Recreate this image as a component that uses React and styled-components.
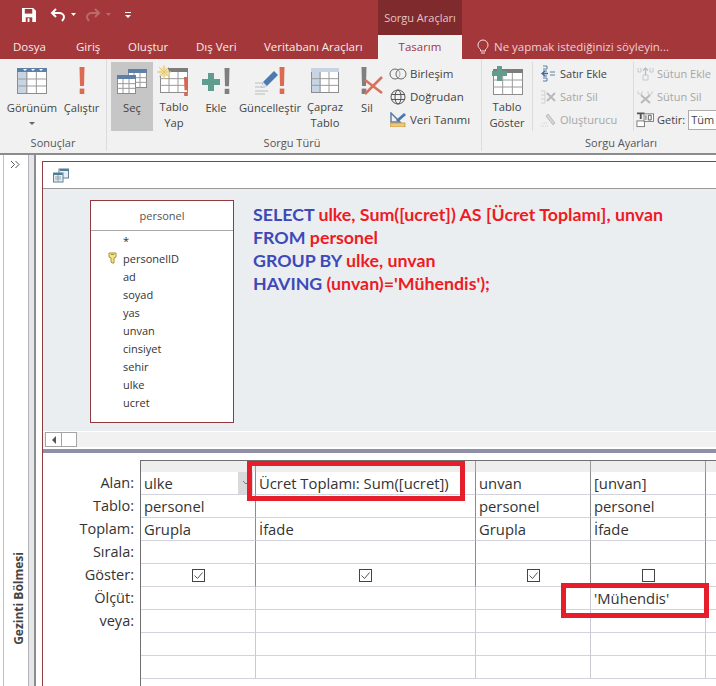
import React from 'react'
import styled, { createGlobalStyle } from 'styled-components'

const GlobalStyle = createGlobalStyle`
  html, body {
    margin: 0;
    padding: 0;
    background: #fff;
  }
  * {
    box-sizing: border-box;
  }
`

const Page = styled.div`
  position: relative;
  width: 716px;
  height: 686px;
  overflow: hidden;
  font-family: "Open Sans", "Noto Sans", sans-serif;
  color: #444;
  background: #fff;
`

const TitleBar = styled.div`
  display: flex;
  height: 35px;
  background: #a4373a;
`
const Qat = styled.div`
  display: flex;
  align-items: center;
  width: 378px;
  padding: 0 0 5px 22px;
`
const QatItem = styled.span`
  display: flex;
  margin-left: ${(p) => p.$ml || 0}px;
`
const ContextTitle = styled.div`
  width: 84px;
  background: #7f2a2d;
  color: #e6c4c5;
  font-size: 11px;
  line-height: 36px;
  text-align: center;
`

const TabBar = styled.div`
  display: flex;
  height: 24px;
  padding-left: 13px;
  background: #a4373a;
  font-size: 11.5px;
  line-height: 24px;
  color: #f7eaea;
`
const Tab = styled.div`
  width: ${(p) => p.$w}px;
  white-space: nowrap;
`
const ActiveTab = styled.div`
  width: 84px;
  background: #f1f1f1;
  color: #a4373a;
  text-align: center;
`
const TellMe = styled.div`
  display: flex;
  align-items: center;
  gap: 5px;
  margin-left: 15px;
  color: #ecd0d1;
  white-space: nowrap;
`

const Ribbon = styled.div`
  display: flex;
  height: 94px;
  background: #f1f1f1;
`
const Group = styled.div`
  display: flex;
  flex-direction: column;
  flex: none;
  width: ${(p) => p.$w}px;
  border-right: ${(p) => (p.$open ? 'none' : '1px solid #dcdcdc')};
  margin-bottom: 2px;
`
const GroupBody = styled.div`
  display: flex;
  height: 76px;
  padding: 3px 0 0 ${(p) => p.$pad || 0}px;
`
const GroupLabel = styled.div`
  height: 16px;
  font-size: 11px;
  line-height: 16px;
  color: #555;
  text-align: center;
  padding-left: ${(p) => p.$left || 0}px;
  padding-right: ${(p) => p.$right || 0}px;
`
const LargeButton = styled.div`
  display: flex;
  flex-direction: column;
  align-items: center;
  flex: none;
  width: ${(p) => p.$w}px;
  height: 69px;
  background: ${(p) => (p.$active ? '#c6c6c6' : 'transparent')};
  font-size: 11.2px;
  line-height: 16px;
  text-align: center;
  white-space: nowrap;
`
const LargeIcon = styled.div`
  display: flex;
  align-items: center;
  justify-content: center;
  height: 38px;
  padding-left: ${(p) => p.$shift || 0}px;
`
const Caret = styled.div`
  width: 0;
  height: 0;
  margin-top: 6px;
  border-left: 3px solid transparent;
  border-right: 3px solid transparent;
  border-top: 3px solid #666;
`
const SmallColumn = styled.div`
  display: flex;
  flex-direction: column;
  flex: none;
  width: ${(p) => p.$w}px;
  height: 69px;
  padding-left: ${(p) => p.$pad || 0}px;
  border-left: ${(p) => (p.$line ? '1px solid #dcdcdc' : 'none')};
  font-size: ${(p) => p.$fs || 11.5}px;
`
const SmallButton = styled.div`
  display: flex;
  align-items: center;
  gap: 3px;
  height: 23px;
  white-space: nowrap;
  color: ${(p) => (p.$off ? '#a6a6a6' : '#444')};
`
const SmallIcon = styled.span`
  display: flex;
  justify-content: center;
  flex: none;
  width: 18px;
`
const TopInput = styled.span`
  display: block;
  width: 28px;
  height: 20px;
  margin-left: 0;
  padding-left: 2px;
  background: #fff;
  border: 1px solid #ababab;
  border-right: none;
  line-height: 18px;
`

const Workspace = styled.div`
  display: flex;
  height: 533px;
  border-top: 2px solid #8c8c8c;
`
const NavPane = styled.div`
  display: flex;
  flex-direction: column;
  justify-content: space-between;
  flex: none;
  width: 28px;
  margin-left: 3px;
  border-left: 1px solid #c0c0c0;
  padding: 5px 0 41px 6px;
  background: #fff;
`
const NavTitle = styled.div`
  writing-mode: vertical-rl;
  transform: rotate(180deg);
  font-size: 12px;
  font-weight: 700;
  color: #444;
  white-space: nowrap;
`
const Strip = styled.div`
  flex: none;
  width: 8px;
  margin-left: -3px;
  background: #e3e6ea;
  border-left: 1px solid #b5b5b5;
  border-right: 2px solid #8d8d8d;
`
const Gutter = styled.div`
  flex: none;
  width: 6px;
  background: #fff;
`
const QueryWindow = styled.div`
  flex: none;
  width: 680px;
  margin-top: 6px;
  border-left: 1px solid #8f3b40;
  border-top: 1px solid #8f3b40;
  display: flex;
  flex-direction: column;
  background: #fff;
`
const WindowHead = styled.div`
  display: flex;
  align-items: center;
  height: 27px;
  padding-left: 10px;
  border-bottom: 1px solid #9a9a9a;
`
const DesignPane = styled.div`
  display: flex;
  height: 242px;
  padding: 11px 0 0 47px;
  background: #ebeef1;
  gap: 19px;
`
const TableBox = styled.div`
  flex: none;
  width: 144px;
  height: 223px;
  background: #fff;
  border: 1px solid #8f3b40;
`
const TableName = styled.div`
  height: 30px;
  border-bottom: 1px solid #a8a8a8;
  font-size: 11px;
  line-height: 30px;
  text-align: center;
  color: #555;
`
const FieldList = styled.div`
  padding-top: 0;
`
const Field = styled.div`
  display: flex;
  align-items: center;
  height: 18px;
  padding-left: 17px;
  font-size: 11px;
  color: #333;
`
const FieldIcon = styled.span`
  display: flex;
  flex: none;
  width: 15px;
`
const Sql = styled.div`
  padding-top: 3px;
  font-family: Lato, "Open Sans", sans-serif;
  font-weight: 700;
  font-size: 17.8px;
  line-height: 23px;
  white-space: nowrap;
`
const SqlLine = styled.div`
  color: #ed1c24;
`
const Keyword = styled.span`
  color: #3d49b8;
`
const HScroll = styled.div`
  display: flex;
  height: 15px;
  margin-top: 1px;
  padding-left: 2px;
  background: #f1f1f1;
`
const ScrollButton = styled.div`
  display: flex;
  align-items: center;
  justify-content: center;
  width: ${(p) => p.$w}px;
  background: #fff;
  border: 1px solid #a5a5a5;
  border-right: ${(p) => (p.$join ? 'none' : '1px solid #a5a5a5')};
`
const ArrowLeft = styled.div`
  width: 0;
  height: 0;
  border-top: 4px solid transparent;
  border-bottom: 4px solid transparent;
  border-right: 4px solid #555;
`
const Splitter = styled.div`
  height: 4px;
  margin-top: 2px;
  background: #8f8fa8;
`
const GridPane = styled.div`
  flex: 1;
  display: flex;
  padding-top: 7px;
  background: #fff;
`
const RowLabels = styled.div`
  flex: none;
  width: 97px;
  padding-top: 12px;
`
const RowLabel = styled.div`
  height: 23px;
  padding-right: 6px;
  font-size: 14.5px;
  line-height: 21px;
  color: #333;
  text-align: right;
`
const GridTable = styled.div`
  display: grid;
  grid-template-columns: 115px 220px 115px 115px 30px;
  grid-auto-rows: 23px;
  grid-template-rows: 11px;
  border-left: 1px solid #6f6f6f;
  border-top: 1px solid #6f6f6f;
`
const HeadCell = styled.div`
  background: #eeeeee;
  border-right: 1px solid #9a9a9a;
`
const Cell = styled.div`
  position: relative;
  display: flex;
  align-items: center;
  justify-content: ${(p) => (p.$center ? 'center' : 'flex-start')};
  padding-left: ${(p) => (p.$center ? 0 : 3)}px;
  border-right: 1px solid ${(p) => (p.$soft ? '#c9c9d4' : '#8c8c8c')};
  border-bottom: 1px solid #d3d3de;
  font-size: 14.8px;
  color: #333;
  white-space: nowrap;
`
const DropButton = styled.div`
  position: absolute;
  top: 0;
  right: 2px;
  bottom: 0;
  width: 15px;
  display: flex;
  align-items: center;
  justify-content: center;
  background: #dadada;
`
const Highlight = styled.div`
  position: absolute;
  left: ${(p) => p.$x}px;
  top: ${(p) => p.$y}px;
  width: ${(p) => p.$w}px;
  height: ${(p) => p.$h}px;
  border: 5px solid #e61d2b;
`

const SaveIcon = () => (
  <svg width="14" height="14" viewBox="0 0 15 15">
    <path d="M0 0h12l3 3v12H0z" fill="#fff" />
    <rect x="3" y="1" width="8" height="5" fill="#a4373a" />
    <rect x="4" y="10" width="7" height="5" fill="#a4373a" />
    <rect x="6" y="11" width="2" height="4" fill="#fff" />
  </svg>
)
const UndoIcon = ({ color }) => (
  <svg width="26" height="14" viewBox="0 0 26 14">
    <path d="M6 1L2 5l4 4" fill="none" stroke={color} strokeWidth="2" />
    <path d="M2 5h7c3 0 5 2 5 4s-1 3-2 4" fill="none" stroke={color} strokeWidth="2" />
    <path d="M21 5h5l-2.500 3z" fill={color} />
  </svg>
)
const RedoIcon = ({ color }) => (
  <svg width="26" height="14" viewBox="0 0 26 14">
    <path d="M10 1l4 4-4 4" fill="none" stroke={color} strokeWidth="2" />
    <path d="M14 5H7C4 5 2 7 2 9s1 3 2 4" fill="none" stroke={color} strokeWidth="2" />
    <path d="M21 5h5l-2.500 3z" fill={color} />
  </svg>
)
const MoreIcon = () => (
  <svg width="6" height="10" viewBox="0 0 6 10">
    <rect x="0" y="2" width="6" height="1" fill="#fff" />
    <path d="M0 5h6L3 8z" fill="#fff" />
  </svg>
)
const BulbIcon = () => (
  <svg width="12" height="16" viewBox="0 0 12 16">
    <path d="M3.500 10.500C2 9 1 8 1 6a5 5 0 0 1 10 0c0 2-1 3-2.500 4.500V12h-5z" fill="none" stroke="#f3dfdf" />
    <path d="M4 14h4" stroke="#f3dfdf" />
  </svg>
)

// tablo cizimi: x,y konumuna basliklı grid
const GridGlyph = ({ x = 0, y = 0, w, h, head = '#5f7fa8', cols = 3, rows = 3, side }) => {
  const hh = 4
  const lines = []
  for (let i = 1; i < cols; i++) {
    const lx = x + (w * i) / cols
    lines.push(<path key={'c' + i} d={`M${lx} ${y}v${h}`} stroke="#9a9a9a" />)
  }
  for (let i = 1; i < rows; i++) {
    const ly = y + hh + ((h - hh) * i) / rows
    lines.push(<path key={'r' + i} d={`M${x} ${ly}h${w}`} stroke="#9a9a9a" />)
  }
  return (
    <g>
      <rect x={x + 0.5} y={y + 0.5} width={w} height={h} fill="#fff" stroke="#8c8c8c" />
      {side && <rect x={x + 1} y={y + hh} width={w / cols} height={h - hh} fill="#c6d4e4" />}
      {lines}
      <rect x={x} y={y} width={w + 1} height={hh} fill={head} />
    </g>
  )
}
const Bang = ({ x, y, h, color = '#d9644f', w = 3 }) => (
  <g fill={color}>
    <path d={`M${x - w / 2} ${y}h${w}l-0.500 ${h * 0.7}h-${w - 1}z`} />
    <rect x={x - w / 2 + 0.2} y={y + h * 0.8} width={w - 0.4} height={h * 0.2} />
  </g>
)

const ViewIcon = () => (
  <svg width="32" height="28" viewBox="0 0 32 28">
    <GridGlyph x={1} y={1} w={29} h={25} side />
    <path d="M7 2h4l-2 2zM15 2h4l-2 2zM23 2h4l-2 2z" fill="#fff" />
  </svg>
)
const RunIcon = () => (
  <svg width="12" height="30" viewBox="0 0 12 30">
    <Bang x={6} y={1} h={27} w={5} color="#dc6a52" />
  </svg>
)
const SelectIcon = () => (
  <svg width="32" height="26" viewBox="0 0 32 26">
    <GridGlyph x={12} y={1} w={18} h={18} />
    <GridGlyph x={1} y={7} w={18} h={18} />
  </svg>
)
const MakeTableIcon = () => (
  <svg width="34" height="32" viewBox="0 0 34 32">
    <GridGlyph x={3} y={3} w={27} h={24} head="#7c7c7c" />
    <circle cx="7" cy="7" r="5" fill="#f3e3b0" />
    <path d="M7 0v14M0 7h14M2 2l10 10M12 2L2 12" stroke="#e5c777" />
    <Bang x={29} y={12} h={19} w={4} color="#d9644f" />
  </svg>
)
const AppendIcon = () => (
  <svg width="28" height="28" viewBox="0 0 28 28">
    <path d="M6 0h6v6h6v6h-6v6H6v-6H0V6h6z" fill="#5f9e8f" transform="translate(0 6)" />
    <Bang x={25} y={1} h={26} w={5} color="#7f7f7f" />
  </svg>
)
const UpdateIcon = () => (
  <svg width="32" height="28" viewBox="0 0 32 28">
    <path d="M1 16h12M1 20h10M1 24h13M1 27h10" stroke="#bdbdbd" />
    <path d="M7 21l2-6L20 4l4 4L13 19z" fill="#4c7ab0" />
    <path d="M7 21l2-6 4 4z" fill="#dbe4ee" />
    <Bang x={28} y={0} h={27} w={5} color="#dc6a52" />
  </svg>
)
const CrossIcon = () => (
  <svg width="30" height="27" viewBox="0 0 30 27">
    <GridGlyph x={1} y={1} w={27} h={24} head="#c6d4e4" side />
  </svg>
)
const DeleteIcon = () => (
  <svg width="24" height="30" viewBox="0 0 24 30">
    <Bang x={4} y={1} h={27} w={5} color="#7f7f7f" />
    <path d="M5 14l17 13M22 11L5 28" stroke="#d9705c" strokeWidth="2.500" />
  </svg>
)
const ShowTableIcon = () => (
  <svg width="32" height="30" viewBox="0 0 32 30">
    <GridGlyph x={2} y={3} w={29} h={25} head="#7c7c7c" />
    <path d="M6 0h5v5h5v5h-5v5H6v-5H1V5h5z" fill="#5f9e8f" />
  </svg>
)
const JoinIcon = () => (
  <svg width="18" height="12" viewBox="0 0 18 12">
    <circle cx="6" cy="6" r="5" fill="none" stroke="#666" />
    <circle cx="12" cy="6" r="5" fill="#f5f5f5" stroke="#666" fillOpacity="0.4" />
  </svg>
)
const GlobeIcon = () => (
  <svg width="16" height="16" viewBox="0 0 16 16" fill="none" stroke="#555">
    <circle cx="8" cy="8" r="7" />
    <ellipse cx="8" cy="8" rx="3" ry="7" />
    <path d="M1 5.500h14M1 10.500h14" />
  </svg>
)
const DefinitionIcon = () => (
  <svg width="17" height="15" viewBox="0 0 17 15">
    <path d="M1 1v9h9z" fill="none" stroke="#5f7fa8" strokeWidth="1.500" />
    <path d="M6 8l8-7 2 2-8 7z" fill="#4c7ab0" />
    <rect x="0" y="11" width="15" height="4" fill="#f0c977" stroke="#c08a2e" strokeWidth="0.700" />
  </svg>
)
const RowAddIcon = () => (
  <svg width="16" height="17" viewBox="0 0 16 17" fill="none">
    <path d="M3 1h4v3H3M3 6h4M3 11h4M3 13h4v3H3" stroke="#5f7fa8" />
    <path d="M8 8.500H2M5 6L2 8.500 5 11" stroke="#3f6aa0" strokeWidth="1.300" />
    <path d="M10 7h5M10 10h5" stroke="#5f7fa8" />
  </svg>
)
const RowRemoveIcon = () => (
  <svg width="16" height="14" viewBox="0 0 16 14" fill="none">
    <path d="M1 1h4v12H1M1 5h4M1 9h4" stroke="#cfcfcf" />
    <path d="M7 3l8 8M15 3l-8 8" stroke="#b9b9b9" strokeWidth="2" />
  </svg>
)
const BuilderIcon = () => (
  <svg width="16" height="14" viewBox="0 0 16 14" fill="none">
    <path d="M1 13h8M2 10h5" stroke="#cfcfcf" strokeDasharray="1 1" />
    <path d="M8 1l7 9-2 2-7-9z" fill="#d5d5d5" stroke="#bcbcbc" />
  </svg>
)
const ColAddIcon = () => (
  <svg width="17" height="14" viewBox="0 0 17 14" fill="none">
    <path d="M1 1v4h3V1M13 1v4h3V1M6 8h5v5H6z" stroke="#c8c8c8" />
    <path d="M8.500 8V1M6 3.500l2.500-2.500L11 3.500" stroke="#a9bcd2" strokeWidth="1.200" />
  </svg>
)
const ColRemoveIcon = () => (
  <svg width="17" height="14" viewBox="0 0 17 14" fill="none">
    <path d="M1 1v3h4V1M11 1v3h4V1" stroke="#cfcfcf" />
    <path d="M4 5l9 8M13 5l-9 8" stroke="#b9b9b9" strokeWidth="2" />
  </svg>
)
const TopIcon = () => (
  <svg width="19" height="17" viewBox="0 0 19 17">
    <path d="M1 1h8v2H6v5H4V3H1z" fill="#555" />
    <rect x="1" y="10" width="8" height="6" fill="#fff" stroke="#7a7a7a" />
    <rect x="8.500" y="2.500" width="10" height="8" fill="#fff" stroke="#7a7a7a" />
    <path d="M10.500 4v5M13 4h3v5h-3z" stroke="#555" fill="none" />
  </svg>
)
const WindowIcon = () => (
  <svg width="16" height="15" viewBox="0 0 16 15">
    <rect x="6" y="1" width="9.500" height="9" fill="#e9eff5" stroke="#5f7f95" />
    <rect x="7" y="1" width="8" height="2" fill="#4f7f95" />
    <rect x="0.500" y="5" width="9.500" height="9" fill="#e9eff5" stroke="#5f7f95" />
    <rect x="1" y="5" width="8.500" height="2" fill="#4f7f95" />
    <path d="M2 9h6M2 11h6M5 7v7" stroke="#8aa5b5" />
  </svg>
)
const KeyIcon = () => (
  <svg width="9" height="12" viewBox="0 0 9 12">
    <path d="M1 1h7v4L6 6v5H4l-1-1V6L1 5z" fill="#f3e38a" stroke="#a8922e" />
    <path d="M3 2.500h3" stroke="#a8922e" />
  </svg>
)
const Chevron = () => (
  <svg width="8" height="6" viewBox="0 0 8 6">
    <path d="M1 1l3 3 3-3" fill="none" stroke="#777" />
  </svg>
)
const DoubleChevron = () => (
  <svg width="10" height="9" viewBox="0 0 10 9" fill="none" stroke="#555">
    <path d="M1 1l3.500 3.500L1 8M5.500 1L9 4.500 5.500 8" />
  </svg>
)
const CheckBox = ({ on }) => (
  <svg width="13" height="13" viewBox="0 0 13 13" fill="none">
    <rect x="0.500" y="0.500" width="12" height="12" stroke="#444" />
    {on && <path d="M2.500 6.500l3 3 5-6" stroke="#555" />}
  </svg>
)

const fields = ['*', 'personelID', 'ad', 'soyad', 'yas', 'unvan', 'cinsiyet', 'sehir', 'ulke', 'ucret']
const labels = ['Alan:', 'Tablo:', 'Toplam:', 'Sırala:', 'Göster:', 'Ölçüt:', 'veya:']

const gridRows = [
  ['ulke', 'Ücret Toplamı: Sum([ucret])', 'unvan', '[unvan]', ''],
  ['personel', '', 'personel', 'personel', ''],
  ['Grupla', 'İfade', 'Grupla', 'İfade', ''],
  ['', '', '', '', ''],
  [true, true, true, false, ''],
  ['', '', '', "'Mühendis'", ''],
  ['', '', '', '', ''],
  ['', '', '', '', ''],
  ['', '', '', '', ''],
]

function App() {
  return (
    <Page>
      <GlobalStyle />
      <TitleBar>
        <Qat>
          <SaveIcon />
          <QatItem $ml={14}><UndoIcon color="#fff" /></QatItem>
          <QatItem $ml={9}><RedoIcon color="#bb6a6c" /></QatItem>
          <QatItem $ml={14}><MoreIcon /></QatItem>
        </Qat>
        <ContextTitle>Sorgu Araçları</ContextTitle>
      </TitleBar>
      <TabBar>
        <Tab $w={63}>Dosya</Tab>
        <Tab $w={52}>Giriş</Tab>
        <Tab $w={68}>Oluştur</Tab>
        <Tab $w={68}>Dış Veri</Tab>
        <Tab $w={114}>Veritabanı Araçları</Tab>
        <ActiveTab>Tasarım</ActiveTab>
        <TellMe>
          <BulbIcon />
          Ne yapmak istediğinizi söyleyin...
        </TellMe>
      </TabBar>
      <Ribbon>
        <Group $w={107}>
          <GroupBody $pad={5}>
            <LargeButton $w={54}>
              <LargeIcon><ViewIcon /></LargeIcon>
              Görünüm
              <Caret />
            </LargeButton>
            <LargeButton $w={45}>
              <LargeIcon><RunIcon /></LargeIcon>
              Çalıştır
            </LargeButton>
          </GroupBody>
          <GroupLabel>Sonuçlar</GroupLabel>
        </Group>
        <Group $w={375}>
          <GroupBody $pad={4}>
            <LargeButton $w={42} $active>
              <LargeIcon><SelectIcon /></LargeIcon>
              Seç
            </LargeButton>
            <LargeButton $w={42}>
              <LargeIcon><MakeTableIcon /></LargeIcon>
              Tablo
              <br />
              Yap
            </LargeButton>
            <LargeButton $w={42}>
              <LargeIcon><AppendIcon /></LargeIcon>
              Ekle
            </LargeButton>
            <LargeButton $w={66}>
              <LargeIcon><UpdateIcon /></LargeIcon>
              Güncelleştir
            </LargeButton>
            <LargeButton $w={44}>
              <LargeIcon><CrossIcon /></LargeIcon>
              Çapraz
              <br />
              Tablo
            </LargeButton>
            <LargeButton $w={40}>
              <LargeIcon $shift={10}><DeleteIcon /></LargeIcon>
              Sil
            </LargeButton>
            <SmallColumn $w={93} $pad={2}>
              <SmallButton><SmallIcon><JoinIcon /></SmallIcon>Birleşim</SmallButton>
              <SmallButton><SmallIcon><GlobeIcon /></SmallIcon>Doğrudan</SmallButton>
              <SmallButton><SmallIcon><DefinitionIcon /></SmallIcon>Veri Tanımı</SmallButton>
            </SmallColumn>
          </GroupBody>
          <GroupLabel $right={4}>Sorgu Türü</GroupLabel>
        </Group>
        <Group $w={234} $open>
          <GroupBody>
            <LargeButton $w={50}>
              <LargeIcon><ShowTableIcon /></LargeIcon>
              Tablo
              <br />
              Göster
            </LargeButton>
            <SmallColumn $w={101} $line $pad={6} $fs={11}>
              <SmallButton><SmallIcon><RowAddIcon /></SmallIcon>Satır Ekle</SmallButton>
              <SmallButton $off><SmallIcon><RowRemoveIcon /></SmallIcon>Satır Sil</SmallButton>
              <SmallButton $off><SmallIcon><BuilderIcon /></SmallIcon>Oluşturucu</SmallButton>
            </SmallColumn>
            <SmallColumn $w={83} $line $pad={2} $fs={11}>
              <SmallButton $off><SmallIcon><ColAddIcon /></SmallIcon>Sütun Ekle</SmallButton>
              <SmallButton $off><SmallIcon><ColRemoveIcon /></SmallIcon>Sütun Sil</SmallButton>
              <SmallButton>
                <SmallIcon><TopIcon /></SmallIcon>
                Getir:
                <TopInput>Tüm</TopInput>
              </SmallButton>
            </SmallColumn>
          </GroupBody>
          <GroupLabel $left={44}>Sorgu Ayarları</GroupLabel>
        </Group>
      </Ribbon>
      <Workspace>
        <NavPane>
          <DoubleChevron />
          <NavTitle>Gezinti Bölmesi</NavTitle>
        </NavPane>
        <Strip />
        <Gutter />
        <QueryWindow>
          <WindowHead><WindowIcon /></WindowHead>
          <DesignPane>
            <TableBox>
              <TableName>personel</TableName>
              <FieldList>
                {fields.map((f) => (
                  <Field key={f}>
                    <FieldIcon>{f === 'personelID' && <KeyIcon />}</FieldIcon>
                    {f}
                  </Field>
                ))}
              </FieldList>
            </TableBox>
            <Sql>
              <SqlLine><Keyword>SELECT</Keyword> ulke, Sum([ucret]) AS [Ücret Toplamı], unvan</SqlLine>
              <SqlLine><Keyword>FROM</Keyword> personel</SqlLine>
              <SqlLine><Keyword>GROUP BY</Keyword> ulke, unvan</SqlLine>
              <SqlLine><Keyword>HAVING</Keyword> (unvan)='Mühendis');</SqlLine>
            </Sql>
          </DesignPane>
          <HScroll>
            <ScrollButton $w={16} $join><ArrowLeft /></ScrollButton>
            <ScrollButton $w={16} />
          </HScroll>
          <Splitter />
          <GridPane>
            <RowLabels>
              {labels.map((l) => <RowLabel key={l}>{l}</RowLabel>)}
            </RowLabels>
            <GridTable>
              {gridRows[0].map((_, i) => <HeadCell key={i} />)}
              {gridRows.map((row, r) =>
                row.map((value, c) => (
                  <Cell key={r + '-' + c} $center={typeof value === 'boolean'} $soft={r > 4}>
                    {typeof value === 'boolean' ? <CheckBox on={value} /> : value}
                    {r === 0 && c === 0 && <DropButton><Chevron /></DropButton>}
                  </Cell>
                ))
              )}
            </GridTable>
          </GridPane>
        </QueryWindow>
      </Workspace>
      <Highlight $x={247} $y={461} $w={218} $h={40} />
      <Highlight $x={561} $y={583} $w={148} $h={35} />
    </Page>
  )
}

export default App
